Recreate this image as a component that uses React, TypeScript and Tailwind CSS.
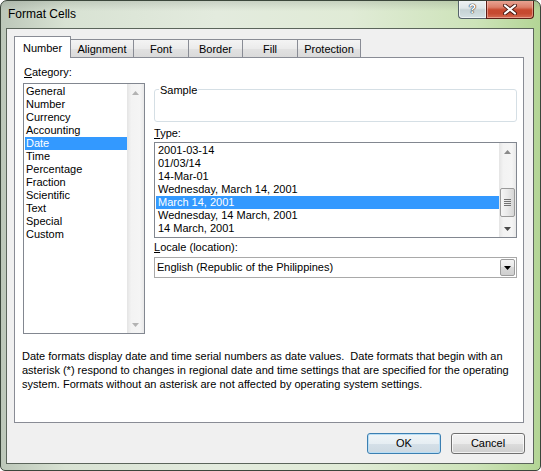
import React from 'react';

const categories = ['General', 'Number', 'Currency', 'Accounting', 'Date', 'Time', 'Percentage', 'Fraction', 'Scientific', 'Text', 'Special', 'Custom'];
const types = ['2001-03-14', '01/03/14', '14-Mar-01', 'Wednesday, March 14, 2001', 'March 14, 2001', 'Wednesday, 14 March, 2001', '14 March, 2001'];
const tabs = [
  { name: 'Number', w: 'w-[57px]' },
  { name: 'Alignment', w: 'w-[64px]' },
  { name: 'Font', w: 'w-[56px]' },
  { name: 'Border', w: 'w-[55px]' },
  { name: 'Fill', w: 'w-[56px]' },
  { name: 'Protection', w: 'w-[64px]' },
];

function Tri({ up, color }: { up?: boolean; color: string }) {
  return (
    <svg width="7" height="4" viewBox="0 0 7 4">
      {up ? <polygon points="0,4 7,4 3.5,0" fill={color} /> : <polygon points="0,0 7,0 3.5,4" fill={color} />}
    </svg>
  );
}

function ScrollBtn({ up, color }: { up?: boolean; color: string }) {
  return (
    <div className="h-[17px] flex items-center justify-center shrink-0">
      <Tri up={up} color={color} />
    </div>
  );
}

const track = 'bg-[linear-gradient(90deg,#e4e4e4,#f3f3f3_25%,#f5f5f5_75%,#e9e9e9)]';

function App() {
  return (
    <div className="font-['Liberation_Sans',Arial,sans-serif] text-black w-[541px] h-[471px] flex flex-col rounded-t-[7px] rounded-b-[5px] border border-[#3b463b] overflow-hidden bg-[linear-gradient(180deg,rgba(120,130,120,0.25)_0px,rgba(255,255,255,0)_10px),linear-gradient(90deg,#bcc7b9_0%,#d8e2d3_12%,#e3ebde_40%,#e0ebd6_65%,#cde3b9_88%,#b3d595_100%)]">
      {/* title bar */}
      <div className="h-[27px] flex items-start justify-between pl-[7px] pr-[6px] shrink-0">
        <span className="text-[12px] leading-[14px] mt-[6px]">Format Cells</span>
        <div className="flex -mt-px">
          <div className="w-[28px] h-[19px] border border-t-0 border-r-0 border-[#55636a] rounded-bl-[4px] bg-[linear-gradient(180deg,#f0f4f4_0%,#dfe7e8_45%,#c5d2d4_55%,#d4e0e2_100%)] flex items-center justify-center shadow-[inset_0_0_0_1px_rgba(255,255,255,0.6)]">
            <span className="text-[12px] leading-[12px] font-bold text-white [text-shadow:0_0_1px_#333,0_0_1px_#333,0_0_1px_#333]">?</span>
          </div>
          <div className="w-[48px] h-[19px] border border-t-0 border-[#5a1d14] rounded-br-[4px] bg-[linear-gradient(180deg,#eaa898_0%,#dc7f6a_40%,#c8492f_55%,#c64a30_75%,#d66b52_100%)] flex items-center justify-center shadow-[inset_0_0_0_1px_rgba(255,220,210,0.45)]">
            <svg width="14" height="11" viewBox="0 0 14 11">
              <path d="M2,1.5 L12,9.5 M12,1.5 L2,9.5" stroke="#4a1a12" strokeWidth="4" strokeLinecap="round" />
              <path d="M2,1.5 L12,9.5 M12,1.5 L2,9.5" stroke="#ffffff" strokeWidth="2.2" strokeLinecap="round" />
            </svg>
          </div>
        </div>
      </div>

      {/* client */}
      <div className="flex-1 ml-[5px] mr-[6px] mb-[6px] border border-[#5b655b] bg-[#f0f0f0] flex flex-col text-[11px] leading-[13px]">
        {/* tabs */}
        <div className="mt-[7px] ml-[7px] h-[21px] flex items-end">
          {tabs.map((t, i) =>
            i === 0 ? (
              <div key={t.name} className={`${t.w} h-[22px] -mb-px relative z-10 bg-white border border-b-0 border-[#898c95] flex items-center justify-center pt-[2px] shrink-0`}>
                {t.name}
              </div>
            ) : (
              <div key={t.name} className={`${t.w} h-[18px] -ml-px border border-b-0 border-[#898c95] bg-[linear-gradient(180deg,#f4f4f4,#ebebeb_50%,#e2e2e2_50%,#dadada)] flex items-center justify-center pt-px shrink-0`}>
                {t.name}
              </div>
            )
          )}
        </div>

        {/* panel */}
        <div className="ml-[7px] w-[510px] h-[366px] border border-[#898c95] bg-white flex flex-col shrink-0">
          <div className="flex pl-[8px]">
            {/* left column */}
            <div className="w-[122px] flex flex-col">
              <div className="mt-[8px] h-[13px] pl-px">
                <span className="underline">C</span>ategory:
              </div>
              <div className="mt-[4px] h-[251px] border border-[#828790] bg-white flex">
                <div className="flex-1 pl-px pt-px">
                  {categories.map((c) => (
                    <div key={c} className={`h-[13px] pl-px ${c === 'Date' ? 'bg-[#3399ff] text-white' : ''}`}>
                      {c}
                    </div>
                  ))}
                </div>
                <div className={`w-[17px] flex flex-col ${track}`}>
                  <ScrollBtn up color="#b3b3b3" />
                  <div className="flex-1" />
                  <ScrollBtn color="#b3b3b3" />
                </div>
              </div>
            </div>

            {/* right column */}
            <div className="ml-[9px] w-[363px] flex flex-col">
              <div className="mt-[31px] h-[33px] border border-[#d5dfe5] rounded-[3px] relative">
                <span className="absolute left-[4px] -top-[6px] px-px bg-white">Sample</span>
              </div>
              <div className="mt-[5px] h-[13px]">
                <span className="underline">T</span>ype:
              </div>
              <div className="mt-[2px] h-[96px] border border-[#828790] bg-white flex">
                <div className="flex-1 pl-px pt-px">
                  {types.map((t, i) => (
                    <div key={t} className={`h-[13px] pl-[2px] whitespace-nowrap ${i === 4 ? 'bg-[#3399ff] text-white' : ''}`}>
                      {t}
                    </div>
                  ))}
                </div>
                <div className={`w-[17px] flex flex-col ${track}`}>
                  <ScrollBtn up color="#8a8a8a" />
                  <div className="h-[28px]" />
                  <div className="h-[29px] mx-px rounded-[2px] border border-[#9a9a9a] bg-[linear-gradient(90deg,#f6f6f6,#e9e9e9_50%,#d6d6d6)] flex flex-col items-center justify-center gap-[1px]">
                    <div className="w-[7px] h-[1px] bg-[#727272]" />
                    <div className="w-[7px] h-[1px] bg-[#727272]" />
                    <div className="w-[7px] h-[1px] bg-[#727272]" />
                    <div className="w-[7px] h-[1px] bg-[#727272]" />
                  </div>
                  <div className="flex-1" />
                  <ScrollBtn color="#4a4a4a" />
                </div>
              </div>
              <div className="mt-[3px] h-[13px]">
                <span className="underline">L</span>ocale (location):
              </div>
              <div className="mt-[3px] h-[21px] border border-[#a9a9a9] bg-white flex items-center">
                <div className="flex-1 pl-[2px] whitespace-nowrap">English (Republic of the Philippines)</div>
                <div className="w-[15px] h-[17px] mr-px border border-[#9c9c9c] rounded-[2px] bg-[linear-gradient(180deg,#f4f4f4,#e8e8e8_50%,#d9d9d9_50%,#cfcfcf)] flex items-center justify-center">
                  <Tri color="#000000" />
                </div>
              </div>
            </div>
          </div>

          {/* description */}
          <div className="mt-[15px] ml-[7px] leading-[14px] whitespace-pre">
            <div>Date formats display date and time serial numbers as date values.  Date formats that begin with an</div>
            <div>asterisk (*) respond to changes in regional date and time settings that are specified for the operating</div>
            <div>system. Formats without an asterisk are not affected by operating system settings.</div>
          </div>
        </div>

        {/* buttons */}
        <div className="mt-[10px] flex justify-end gap-[10px] pr-[8px]">
          <button className="w-[74px] h-[21px] rounded-[3px] border border-[#3c7fb1] bg-[linear-gradient(180deg,#f0f5f8,#e6eef3_50%,#d5e0e8_50%,#cdd9e2)] shadow-[inset_0_0_0_1px_#b9def5]">
            OK
          </button>
          <button className="w-[74px] h-[21px] rounded-[3px] border border-[#707070] bg-[linear-gradient(180deg,#f2f2f2,#ebebeb_50%,#dddddd_50%,#cfcfcf)] shadow-[inset_0_0_0_1px_rgba(255,255,255,0.7)]">
            Cancel
          </button>
        </div>
      </div>
    </div>
  );
}

export default App;
